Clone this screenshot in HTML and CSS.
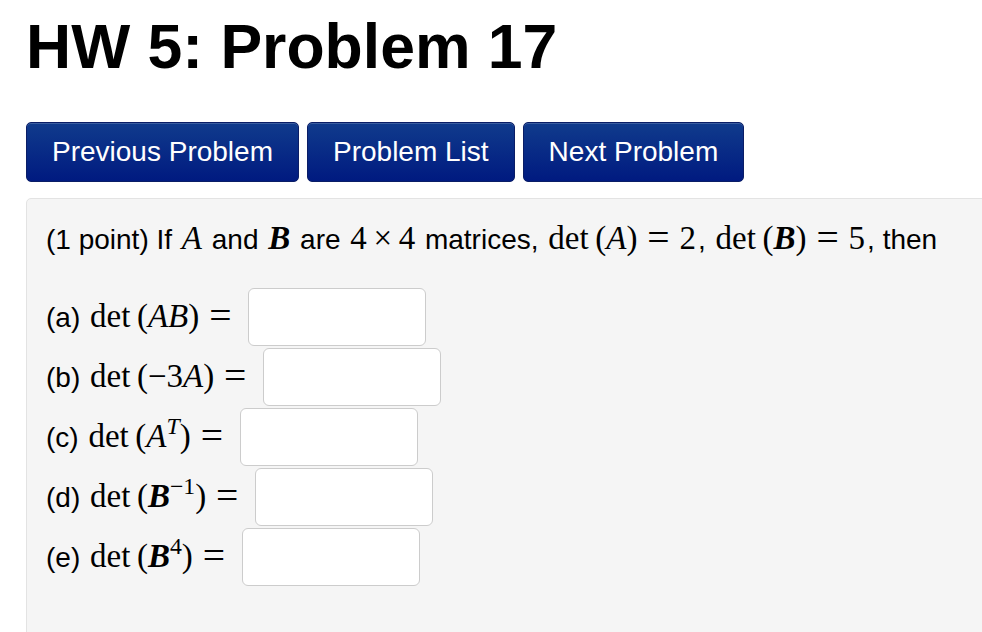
FILE: index.html
```html
<!DOCTYPE html>
<html lang="en">
<head>
    <meta charset="UTF-8">
    <meta name="viewport" content="width=device-width, initial-scale=1.0">
    <title>HW 5: Problem 17</title>
    <link rel="stylesheet" href="styles.css">
</head>
<body>
    <div class="page">
        <h1>HW 5: Problem 17</h1>

        <div class="nav">
            <button class="btn">Previous Problem</button>
            <button class="btn">Problem List</button>
            <button class="btn">Next Problem</button>
        </div>

        <div class="problem">
            <p class="intro">(1 point) If <span class="m"><i>A</i></span> and <span class="m"><i class="b">B</i></span> are <span class="m">4<span class="op">×</span>4</span> matrices, <span class="m">det&thinsp;(<i>A</i>)<span class="rel">=</span>2</span>, <span class="m">det&thinsp;(<i class="b">B</i>)<span class="rel">=</span>5</span>, then</p>

            <div class="row">
                <span class="label">(a) <span class="m">det&thinsp;(<i>AB</i>)<span class="rel">=</span></span></span>
                <input class="answer" type="text">
            </div>
            <div class="row">
                <span class="label">(b) <span class="m">det&thinsp;(−3<i>A</i>)<span class="rel">=</span></span></span>
                <input class="answer" type="text">
            </div>
            <div class="row">
                <span class="label">(c) <span class="m">det&thinsp;(<i>A</i><sup><i>T</i></sup>)<span class="rel">=</span></span></span>
                <input class="answer" type="text">
            </div>
            <div class="row">
                <span class="label">(d) <span class="m">det&thinsp;(<i class="b">B</i><sup>−1</sup>)<span class="rel">=</span></span></span>
                <input class="answer" type="text">
            </div>
            <div class="row">
                <span class="label">(e) <span class="m">det&thinsp;(<i class="b">B</i><sup>4</sup>)<span class="rel">=</span></span></span>
                <input class="answer" type="text">
            </div>
        </div>
    </div>
</body>
</html>
```

FILE: styles.css
```css
* {
    box-sizing: border-box;
}

html, body {
    margin: 0;
    padding: 0;
    overflow: hidden;
    background: #fff;
}

body {
    font-family: 'Liberation Sans', Arial, sans-serif;
    font-size: 28px;
    color: #000;
}

.page {
    padding: 14px 0 0 26px;
}

h1 {
    margin: 0 0 44px 0;
    font-size: 62.5px;
    line-height: 64px;
    font-weight: bold;
}

.nav {
    display: flex;
    gap: 8px;
}

.btn {
    font-family: 'Liberation Sans', Arial, sans-serif;
    font-size: 28px;
    line-height: 40px;
    padding: 9px 25px;
    color: #fff;
    border: 1px solid #0a1d66;
    border-radius: 5px;
    background: linear-gradient(#103b8c, #001a80);
    box-shadow: inset 0 1px 0 rgba(255,255,255,0.18);
    cursor: pointer;
}

.problem {
    margin: 16px -60px 0 0;
    padding: 19px 19px 80px;
    min-height: 520px;
    background: #f5f5f5;
    border: 1px solid #e3e3e3;
    border-radius: 5px;
}

.intro {
    margin: 0 0 27px;
    line-height: 40px;
    white-space: nowrap;
}

/* math pieces, set in a Times-like face */
.m {
    font-family: 'Liberation Serif', 'Times New Roman', serif;
    font-size: 33px;
    white-space: nowrap;
    padding: 0 2px;
}

.m i {
    font-style: italic;
}

.m .b {
    font-weight: bold;
}

.m sup {
    font-size: 72%;
    line-height: 0;
    vertical-align: 0.55em;
}

.rel {
    font-size: 1.2em;
    line-height: 0;
    margin: 0 0.25em;
    vertical-align: -2px;
}

.op {
    margin: 0 0.2em;
}

.row {
    display: flex;
    align-items: center;
    height: 60px;
}

.label {
    line-height: 40px;
    white-space: nowrap;
}

.answer {
    width: 178px;
    height: 58px;
    margin-left: 5px;
    border: 1px solid #cccccc;
    border-radius: 6px;
    background: #fff;
    font-size: 28px;
}
```
